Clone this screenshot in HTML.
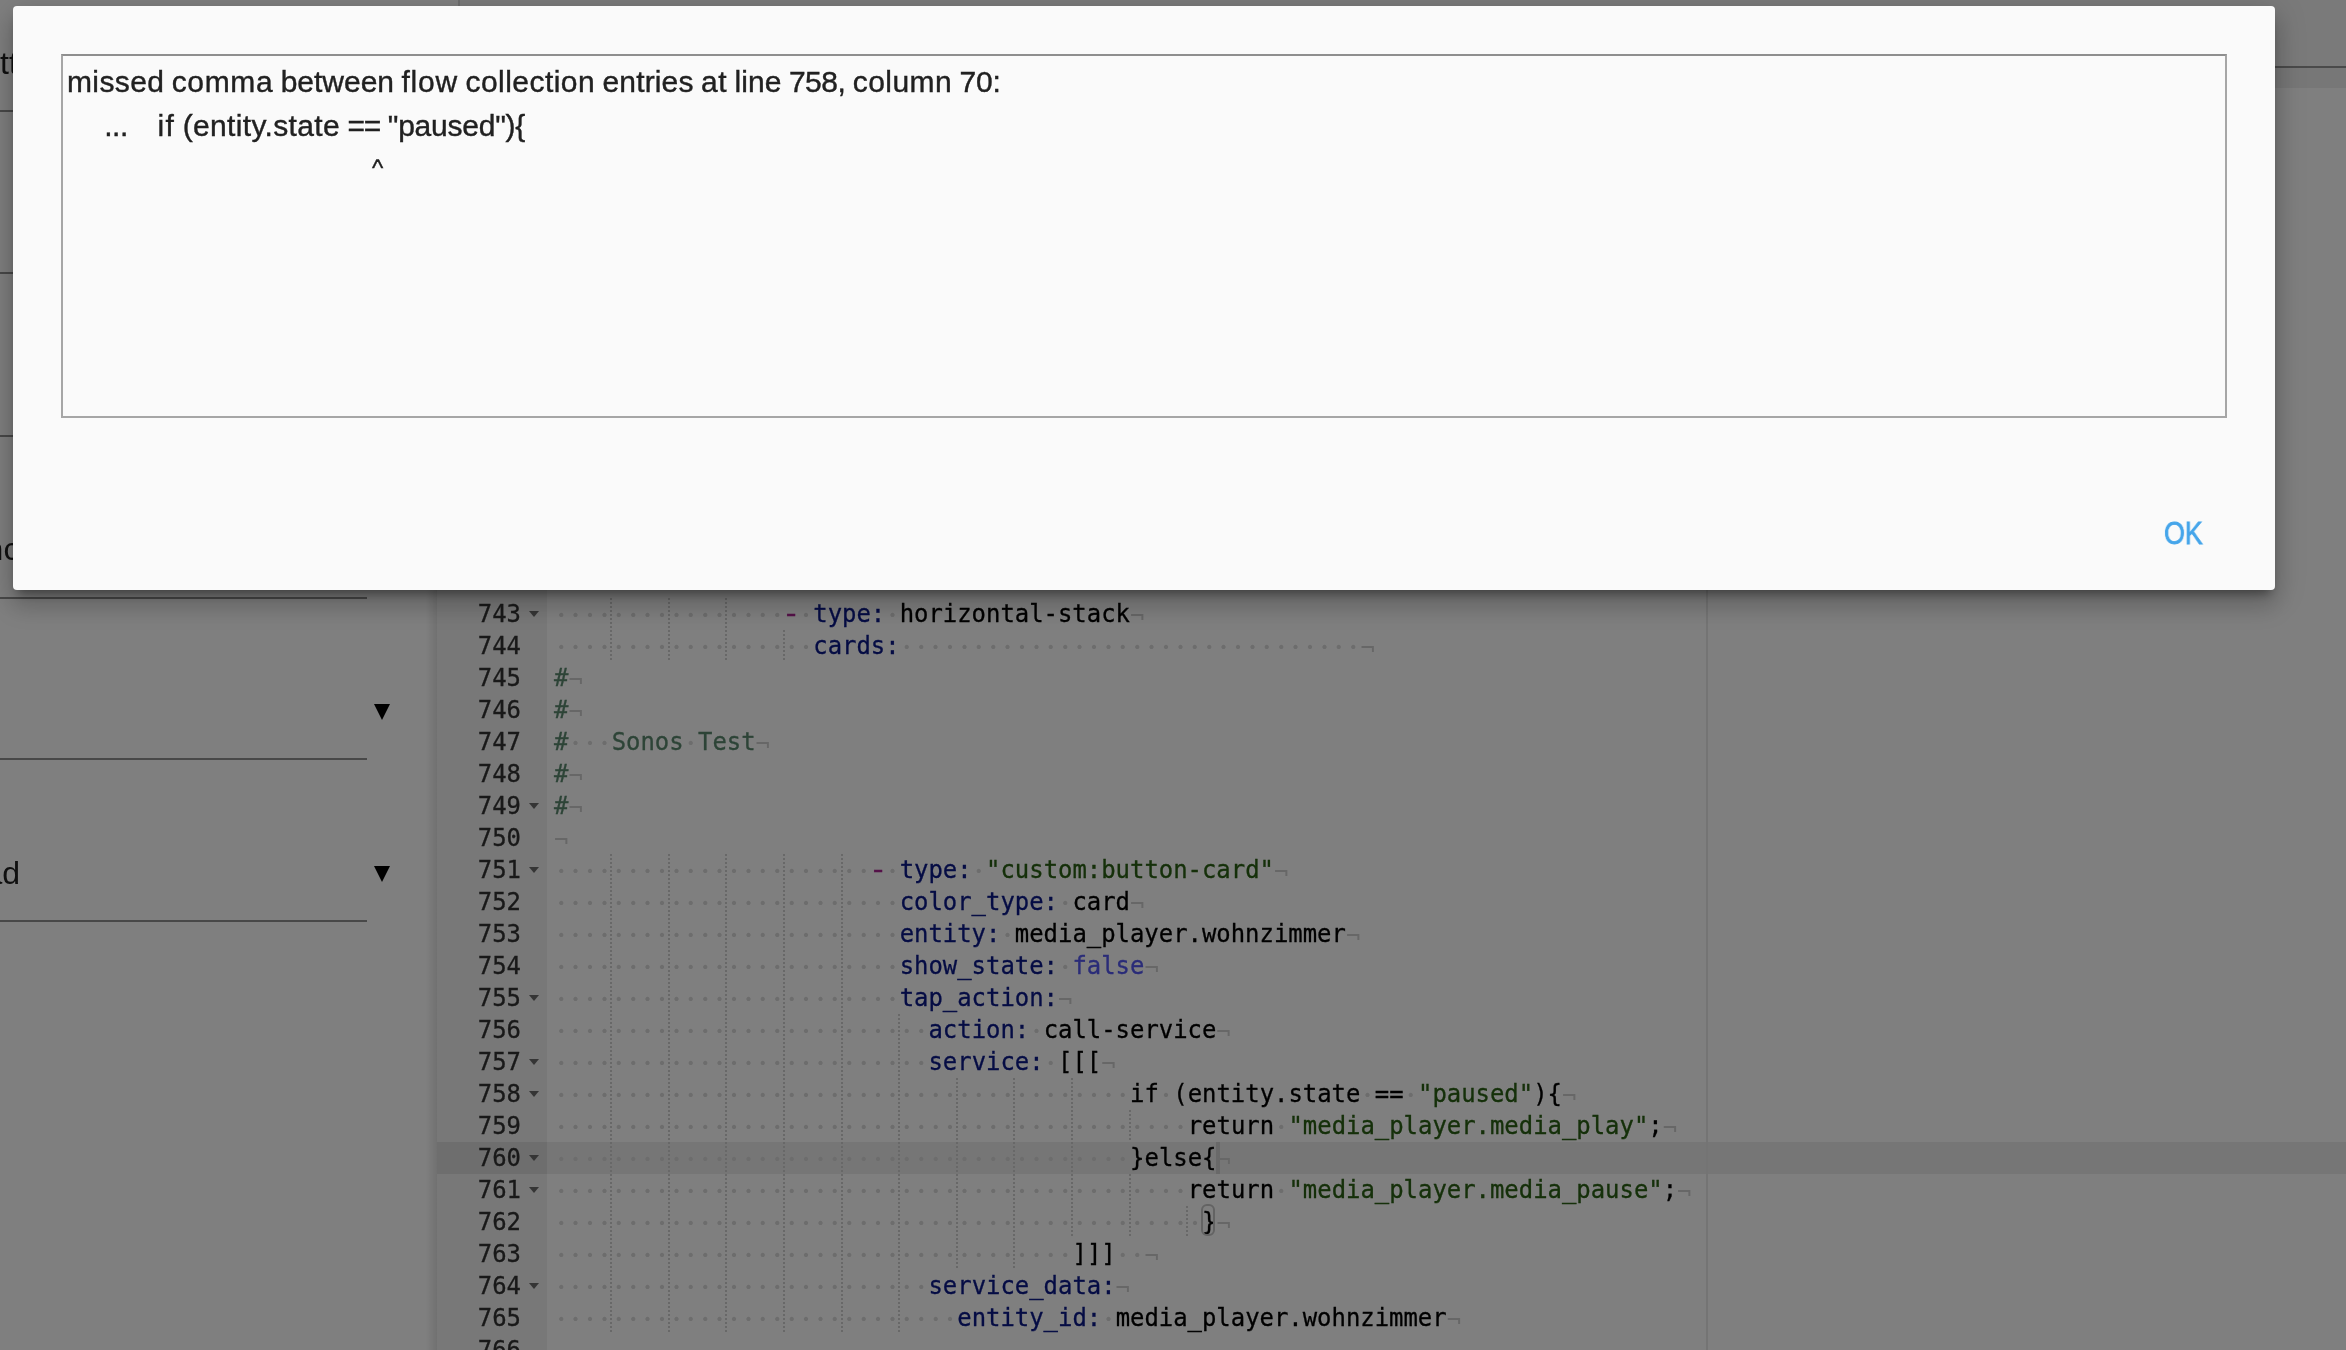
<!DOCTYPE html>
<html lang="en">
<head>
<meta charset="utf-8">
<title>Lovelace raw config editor</title>
<style>
html,body{margin:0;padding:0;}
body{width:2346px;height:1350px;overflow:hidden;position:relative;background:#f4f4f4;font-family:"Liberation Sans",sans-serif;color:#212121;}
#app{position:absolute;left:0;top:0;width:2346px;height:1350px;overflow:hidden;will-change:transform;}
/* page chrome behind the dialog */
.topbar{position:absolute;left:460px;top:0;width:1886px;height:66px;background:#f4f4f4;}
.topline{position:absolute;left:437px;top:66px;width:1909px;height:2px;background:#949494;}
.subbar{position:absolute;left:437px;top:68px;width:1909px;height:20px;background:#eeeeee;}
.left{position:absolute;left:0;top:0;width:458px;height:1350px;background:#fefefe;border-right:2px solid #dcdcdc;}
.left .edge{position:absolute;left:426px;top:88px;width:11px;height:1262px;background:linear-gradient(to right,rgba(0,0,0,0),rgba(0,0,0,0.11));}
.fld{position:absolute;left:0;width:367px;height:2px;background:#909090;}
.lbl{position:absolute;font-size:32px;line-height:40px;white-space:pre;color:#212121;}
.dd{position:absolute;left:373.5px;width:0;height:0;border-left:8.25px solid transparent;border-right:8.25px solid transparent;border-top:16.5px solid #000;}
/* ace editor */
.ace{position:absolute;left:437px;top:88px;width:1909px;height:1262px;background:#ffffff;overflow:hidden;font-family:"DejaVu Sans Mono","Liberation Mono",monospace;font-size:23.918px;line-height:32px;color:#000;-webkit-text-stroke-width:0.3px;}
.gutter{position:absolute;left:0;top:0;width:110px;height:100%;background:#f0f0f0;color:#333;}
.gc{position:absolute;left:0;width:110px;height:32px;box-sizing:border-box;padding-right:26px;text-align:right;white-space:pre;}
.gc.act{background:#dcdcdc;}
.fw{position:absolute;left:92px;top:13px;width:0;height:0;border-left:5px solid transparent;border-right:5px solid transparent;border-top:6px solid #6a6a6a;}
.actline{position:absolute;left:110px;top:1054px;width:1799px;height:32px;background:#ededed;}
.pm{position:absolute;left:1269px;top:0;width:2px;height:100%;background:#e8e8e8;}
.ln{position:absolute;left:117px;height:32px;white-space:pre;}
.ln i{font-style:normal;color:#dadada;position:relative;top:5.1px;left:1.2px;font-family:"Liberation Serif",serif;font-size:36px;letter-spacing:2.412px;line-height:0;-webkit-text-stroke-width:0;}
.ln i.e{top:2px;left:0;color:#cfcfcf;font-family:inherit;font-size:inherit;letter-spacing:0;line-height:inherit;}
.ig{color:#cfcfcf;}
.gd{position:absolute;width:2px;height:32px;background:repeating-linear-gradient(to bottom,#d0d0d0 0,#d0d0d0 2px,transparent 2px,transparent 4px);}
.k{color:#0a1888}.s{color:#2a6014}.c{color:#5a886e}.b{color:#5458f0}.l{color:#aa2492;display:inline-block;transform:scaleX(1.3)}.t{color:#000}
.cur{position:absolute;width:4px;height:32px;background:#d2d2d2;}
.bm{position:absolute;box-sizing:border-box;width:14.4px;height:32px;border:2px solid #c6c6c6;border-radius:6px;}
/* overlay */
.backdrop{position:absolute;left:0;top:0;width:2346px;height:1350px;background:rgba(0,0,0,0.5);}
.dialog{will-change:transform;position:absolute;left:13px;top:6px;width:2262px;height:584px;background:#fafafa;border-radius:4px;box-shadow:0 16px 24px 2px rgba(0,0,0,0.14),0 6px 30px 5px rgba(0,0,0,0.12),0 8px 10px -5px rgba(0,0,0,0.4);}
.ta{position:absolute;left:48px;top:48px;width:2166px;height:364px;box-sizing:border-box;border:2px solid #a6a6a6;border-top-color:#8e8e8e;background:#fafafa;font-size:30px;line-height:44px;color:#212121;}
.ta span{position:absolute;white-space:pre;-webkit-text-stroke:0.4px #212121;}
.ok{position:absolute;font-size:30.7px;line-height:44px;color:#45a5ea;white-space:pre;-webkit-text-stroke:0.8px #45a5ea;transform:scaleX(0.875);transform-origin:0 0;}
</style>
</head>
<body>
<div id="app">
  <div class="topbar"></div>
  <div class="topline"></div>
  <div class="subbar"></div>
  <div class="left">
    <div class="edge"></div>
<div class="fld" style="top:110px"></div>
<div class="fld" style="top:272px"></div>
<div class="fld" style="top:435px"></div>
<div class="fld" style="top:597px"></div>
<div class="fld" style="top:758px"></div>
<div class="fld" style="top:920px"></div>
<div class="dd" style="top:703.5px"></div>
<div class="dd" style="top:865.8px"></div>
<div class="lbl" style="left:0px;top:42.9px">tt</div>
<div class="lbl" style="left:-14.4px;top:528.7px">nc</div>
<div class="lbl" style="left:-15.6px;top:852.8px">ad</div>
  </div>
  <div class="ace">
    <div class="gutter">
<div class="gc" style="top:510px">743<b class="fw"></b></div>
<div class="gc" style="top:542px">744</div>
<div class="gc" style="top:574px">745</div>
<div class="gc" style="top:606px">746</div>
<div class="gc" style="top:638px">747</div>
<div class="gc" style="top:670px">748</div>
<div class="gc" style="top:702px">749<b class="fw"></b></div>
<div class="gc" style="top:734px">750</div>
<div class="gc" style="top:766px">751<b class="fw"></b></div>
<div class="gc" style="top:798px">752</div>
<div class="gc" style="top:830px">753</div>
<div class="gc" style="top:862px">754</div>
<div class="gc" style="top:894px">755<b class="fw"></b></div>
<div class="gc" style="top:926px">756</div>
<div class="gc" style="top:958px">757<b class="fw"></b></div>
<div class="gc" style="top:990px">758<b class="fw"></b></div>
<div class="gc" style="top:1022px">759</div>
<div class="gc act" style="top:1054px">760<b class="fw"></b></div>
<div class="gc" style="top:1086px">761<b class="fw"></b></div>
<div class="gc" style="top:1118px">762</div>
<div class="gc" style="top:1150px">763</div>
<div class="gc" style="top:1182px">764<b class="fw"></b></div>
<div class="gc" style="top:1214px">765</div>
<div class="gc" style="top:1246px">766</div>
    </div>
    <div class="actline"></div>
    <div class="pm"></div>
<div class="ln" style="top:510px"><span class="ig"><i>····</i></span><span class="ig"><i>····</i></span><span class="ig"><i>····</i></span><i>····</i><span class="l">-</span><i>·</i><span class="k">type</span><span class="k">:</span><i>·</i><span class="t">horizontal-stack</span><i class="e">¬</i></div>
<b class="gd" style="left:173px;top:510px"></b>
<b class="gd" style="left:231px;top:510px"></b>
<b class="gd" style="left:288px;top:510px"></b>
<div class="ln" style="top:542px"><span class="ig"><i>····</i></span><span class="ig"><i>····</i></span><span class="ig"><i>····</i></span><span class="ig"><i>····</i></span><i>··</i><span class="k">cards</span><span class="k">:</span><i>································</i><i class="e">¬</i></div>
<b class="gd" style="left:173px;top:542px"></b>
<b class="gd" style="left:231px;top:542px"></b>
<b class="gd" style="left:288px;top:542px"></b>
<b class="gd" style="left:346px;top:542px"></b>
<div class="ln" style="top:574px"><span class="c">#</span><i class="e">¬</i></div>
<div class="ln" style="top:606px"><span class="c">#</span><i class="e">¬</i></div>
<div class="ln" style="top:638px"><span class="c">#<i>·</i><i>·</i><i>·</i>Sonos<i>·</i>Test</span><i class="e">¬</i></div>
<div class="ln" style="top:670px"><span class="c">#</span><i class="e">¬</i></div>
<div class="ln" style="top:702px"><span class="c">#</span><i class="e">¬</i></div>
<div class="ln" style="top:734px"><i class="e">¬</i></div>
<div class="ln" style="top:766px"><span class="ig"><i>····</i></span><span class="ig"><i>····</i></span><span class="ig"><i>····</i></span><span class="ig"><i>····</i></span><span class="ig"><i>····</i></span><i>··</i><span class="l">-</span><i>·</i><span class="k">type</span><span class="k">:</span><i>·</i><span class="s">"custom:button-card"</span><i class="e">¬</i></div>
<b class="gd" style="left:173px;top:766px"></b>
<b class="gd" style="left:231px;top:766px"></b>
<b class="gd" style="left:288px;top:766px"></b>
<b class="gd" style="left:346px;top:766px"></b>
<b class="gd" style="left:404px;top:766px"></b>
<div class="ln" style="top:798px"><span class="ig"><i>····</i></span><span class="ig"><i>····</i></span><span class="ig"><i>····</i></span><span class="ig"><i>····</i></span><span class="ig"><i>····</i></span><i>····</i><span class="k">color_type</span><span class="k">:</span><i>·</i><span class="t">card</span><i class="e">¬</i></div>
<b class="gd" style="left:173px;top:798px"></b>
<b class="gd" style="left:231px;top:798px"></b>
<b class="gd" style="left:288px;top:798px"></b>
<b class="gd" style="left:346px;top:798px"></b>
<b class="gd" style="left:404px;top:798px"></b>
<div class="ln" style="top:830px"><span class="ig"><i>····</i></span><span class="ig"><i>····</i></span><span class="ig"><i>····</i></span><span class="ig"><i>····</i></span><span class="ig"><i>····</i></span><i>····</i><span class="k">entity</span><span class="k">:</span><i>·</i><span class="t">media_player.wohnzimmer</span><i class="e">¬</i></div>
<b class="gd" style="left:173px;top:830px"></b>
<b class="gd" style="left:231px;top:830px"></b>
<b class="gd" style="left:288px;top:830px"></b>
<b class="gd" style="left:346px;top:830px"></b>
<b class="gd" style="left:404px;top:830px"></b>
<div class="ln" style="top:862px"><span class="ig"><i>····</i></span><span class="ig"><i>····</i></span><span class="ig"><i>····</i></span><span class="ig"><i>····</i></span><span class="ig"><i>····</i></span><i>····</i><span class="k">show_state</span><span class="k">:</span><i>·</i><span class="b">false</span><i class="e">¬</i></div>
<b class="gd" style="left:173px;top:862px"></b>
<b class="gd" style="left:231px;top:862px"></b>
<b class="gd" style="left:288px;top:862px"></b>
<b class="gd" style="left:346px;top:862px"></b>
<b class="gd" style="left:404px;top:862px"></b>
<div class="ln" style="top:894px"><span class="ig"><i>····</i></span><span class="ig"><i>····</i></span><span class="ig"><i>····</i></span><span class="ig"><i>····</i></span><span class="ig"><i>····</i></span><i>····</i><span class="k">tap_action</span><span class="k">:</span><i class="e">¬</i></div>
<b class="gd" style="left:173px;top:894px"></b>
<b class="gd" style="left:231px;top:894px"></b>
<b class="gd" style="left:288px;top:894px"></b>
<b class="gd" style="left:346px;top:894px"></b>
<b class="gd" style="left:404px;top:894px"></b>
<div class="ln" style="top:926px"><span class="ig"><i>····</i></span><span class="ig"><i>····</i></span><span class="ig"><i>····</i></span><span class="ig"><i>····</i></span><span class="ig"><i>····</i></span><span class="ig"><i>····</i></span><i>··</i><span class="k">action</span><span class="k">:</span><i>·</i><span class="t">call-service</span><i class="e">¬</i></div>
<b class="gd" style="left:173px;top:926px"></b>
<b class="gd" style="left:231px;top:926px"></b>
<b class="gd" style="left:288px;top:926px"></b>
<b class="gd" style="left:346px;top:926px"></b>
<b class="gd" style="left:404px;top:926px"></b>
<b class="gd" style="left:461px;top:926px"></b>
<div class="ln" style="top:958px"><span class="ig"><i>····</i></span><span class="ig"><i>····</i></span><span class="ig"><i>····</i></span><span class="ig"><i>····</i></span><span class="ig"><i>····</i></span><span class="ig"><i>····</i></span><i>··</i><span class="k">service</span><span class="k">:</span><i>·</i><span class="t">[[[</span><i class="e">¬</i></div>
<b class="gd" style="left:173px;top:958px"></b>
<b class="gd" style="left:231px;top:958px"></b>
<b class="gd" style="left:288px;top:958px"></b>
<b class="gd" style="left:346px;top:958px"></b>
<b class="gd" style="left:404px;top:958px"></b>
<b class="gd" style="left:461px;top:958px"></b>
<div class="ln" style="top:990px"><span class="ig"><i>····</i></span><span class="ig"><i>····</i></span><span class="ig"><i>····</i></span><span class="ig"><i>····</i></span><span class="ig"><i>····</i></span><span class="ig"><i>····</i></span><span class="ig"><i>····</i></span><span class="ig"><i>····</i></span><span class="ig"><i>····</i></span><i>····</i><span class="t">if<i>·</i>(entity.state<i>·</i>==<i>·</i></span><span class="s">"paused"</span><span class="t">){</span><i class="e">¬</i></div>
<b class="gd" style="left:173px;top:990px"></b>
<b class="gd" style="left:231px;top:990px"></b>
<b class="gd" style="left:288px;top:990px"></b>
<b class="gd" style="left:346px;top:990px"></b>
<b class="gd" style="left:404px;top:990px"></b>
<b class="gd" style="left:461px;top:990px"></b>
<b class="gd" style="left:519px;top:990px"></b>
<b class="gd" style="left:576px;top:990px"></b>
<b class="gd" style="left:634px;top:990px"></b>
<div class="ln" style="top:1022px"><span class="ig"><i>····</i></span><span class="ig"><i>····</i></span><span class="ig"><i>····</i></span><span class="ig"><i>····</i></span><span class="ig"><i>····</i></span><span class="ig"><i>····</i></span><span class="ig"><i>····</i></span><span class="ig"><i>····</i></span><span class="ig"><i>····</i></span><span class="ig"><i>····</i></span><i>····</i><span class="t">return<i>·</i></span><span class="s">"media_player.media_play"</span><span class="t">;</span><i class="e">¬</i></div>
<b class="gd" style="left:173px;top:1022px"></b>
<b class="gd" style="left:231px;top:1022px"></b>
<b class="gd" style="left:288px;top:1022px"></b>
<b class="gd" style="left:346px;top:1022px"></b>
<b class="gd" style="left:404px;top:1022px"></b>
<b class="gd" style="left:461px;top:1022px"></b>
<b class="gd" style="left:519px;top:1022px"></b>
<b class="gd" style="left:576px;top:1022px"></b>
<b class="gd" style="left:634px;top:1022px"></b>
<b class="gd" style="left:692px;top:1022px"></b>
<div class="ln" style="top:1054px"><span class="ig"><i>····</i></span><span class="ig"><i>····</i></span><span class="ig"><i>····</i></span><span class="ig"><i>····</i></span><span class="ig"><i>····</i></span><span class="ig"><i>····</i></span><span class="ig"><i>····</i></span><span class="ig"><i>····</i></span><span class="ig"><i>····</i></span><i>····</i><span class="t">}else{</span><i class="e">¬</i></div>
<b class="gd" style="left:173px;top:1054px"></b>
<b class="gd" style="left:231px;top:1054px"></b>
<b class="gd" style="left:288px;top:1054px"></b>
<b class="gd" style="left:346px;top:1054px"></b>
<b class="gd" style="left:404px;top:1054px"></b>
<b class="gd" style="left:461px;top:1054px"></b>
<b class="gd" style="left:519px;top:1054px"></b>
<b class="gd" style="left:576px;top:1054px"></b>
<b class="gd" style="left:634px;top:1054px"></b>
<div class="ln" style="top:1086px"><span class="ig"><i>····</i></span><span class="ig"><i>····</i></span><span class="ig"><i>····</i></span><span class="ig"><i>····</i></span><span class="ig"><i>····</i></span><span class="ig"><i>····</i></span><span class="ig"><i>····</i></span><span class="ig"><i>····</i></span><span class="ig"><i>····</i></span><span class="ig"><i>····</i></span><i>····</i><span class="t">return<i>·</i></span><span class="s">"media_player.media_pause"</span><span class="t">;</span><i class="e">¬</i></div>
<b class="gd" style="left:173px;top:1086px"></b>
<b class="gd" style="left:231px;top:1086px"></b>
<b class="gd" style="left:288px;top:1086px"></b>
<b class="gd" style="left:346px;top:1086px"></b>
<b class="gd" style="left:404px;top:1086px"></b>
<b class="gd" style="left:461px;top:1086px"></b>
<b class="gd" style="left:519px;top:1086px"></b>
<b class="gd" style="left:576px;top:1086px"></b>
<b class="gd" style="left:634px;top:1086px"></b>
<b class="gd" style="left:692px;top:1086px"></b>
<div class="ln" style="top:1118px"><span class="ig"><i>····</i></span><span class="ig"><i>····</i></span><span class="ig"><i>····</i></span><span class="ig"><i>····</i></span><span class="ig"><i>····</i></span><span class="ig"><i>····</i></span><span class="ig"><i>····</i></span><span class="ig"><i>····</i></span><span class="ig"><i>····</i></span><span class="ig"><i>····</i></span><span class="ig"><i>····</i></span><i>·</i><span class="t">}</span><i class="e">¬</i></div>
<b class="gd" style="left:173px;top:1118px"></b>
<b class="gd" style="left:231px;top:1118px"></b>
<b class="gd" style="left:288px;top:1118px"></b>
<b class="gd" style="left:346px;top:1118px"></b>
<b class="gd" style="left:404px;top:1118px"></b>
<b class="gd" style="left:461px;top:1118px"></b>
<b class="gd" style="left:519px;top:1118px"></b>
<b class="gd" style="left:576px;top:1118px"></b>
<b class="gd" style="left:634px;top:1118px"></b>
<b class="gd" style="left:692px;top:1118px"></b>
<b class="gd" style="left:749px;top:1118px"></b>
<div class="ln" style="top:1150px"><span class="ig"><i>····</i></span><span class="ig"><i>····</i></span><span class="ig"><i>····</i></span><span class="ig"><i>····</i></span><span class="ig"><i>····</i></span><span class="ig"><i>····</i></span><span class="ig"><i>····</i></span><span class="ig"><i>····</i></span><i>····</i><span class="t">]]]</span><i>··</i><i class="e">¬</i></div>
<b class="gd" style="left:173px;top:1150px"></b>
<b class="gd" style="left:231px;top:1150px"></b>
<b class="gd" style="left:288px;top:1150px"></b>
<b class="gd" style="left:346px;top:1150px"></b>
<b class="gd" style="left:404px;top:1150px"></b>
<b class="gd" style="left:461px;top:1150px"></b>
<b class="gd" style="left:519px;top:1150px"></b>
<b class="gd" style="left:576px;top:1150px"></b>
<div class="ln" style="top:1182px"><span class="ig"><i>····</i></span><span class="ig"><i>····</i></span><span class="ig"><i>····</i></span><span class="ig"><i>····</i></span><span class="ig"><i>····</i></span><span class="ig"><i>····</i></span><i>··</i><span class="k">service_data</span><span class="k">:</span><i class="e">¬</i></div>
<b class="gd" style="left:173px;top:1182px"></b>
<b class="gd" style="left:231px;top:1182px"></b>
<b class="gd" style="left:288px;top:1182px"></b>
<b class="gd" style="left:346px;top:1182px"></b>
<b class="gd" style="left:404px;top:1182px"></b>
<b class="gd" style="left:461px;top:1182px"></b>
<div class="ln" style="top:1214px"><span class="ig"><i>····</i></span><span class="ig"><i>····</i></span><span class="ig"><i>····</i></span><span class="ig"><i>····</i></span><span class="ig"><i>····</i></span><span class="ig"><i>····</i></span><i>····</i><span class="k">entity_id</span><span class="k">:</span><i>·</i><span class="t">media_player.wohnzimmer</span><i class="e">¬</i></div>
<b class="gd" style="left:173px;top:1214px"></b>
<b class="gd" style="left:231px;top:1214px"></b>
<b class="gd" style="left:288px;top:1214px"></b>
<b class="gd" style="left:346px;top:1214px"></b>
<b class="gd" style="left:404px;top:1214px"></b>
<b class="gd" style="left:461px;top:1214px"></b>
<div class="ln" style="top:1246px"><i class="e">¬</i></div>
    <div class="bm" style="left:763.5px;top:1116px"></div>
    <div class="cur" style="left:779.4px;top:1054px"></div>
  </div>
</div>
<div class="backdrop"></div>
<div class="dialog">
  <div class="ta">
<span style="left:4.00px;top:4px;letter-spacing:0.373px">missed </span>
<span style="left:108.67px;top:4px;letter-spacing:0.653px">comma </span>
<span style="left:217.69px;top:4px;letter-spacing:-0.011px">between </span>
<span style="left:338.45px;top:4px;letter-spacing:0.817px">flow </span>
<span style="left:402.50px;top:4px;letter-spacing:0.455px">collection </span>
<span style="left:539.52px;top:4px;letter-spacing:0.139px">entries </span>
<span style="left:637.97px;top:4px;letter-spacing:0.541px">at </span>
<span style="left:671.48px;top:4px;letter-spacing:0.077px">line </span>
<span style="left:725.92px;top:4px;letter-spacing:-0.493px">758, </span>
<span style="left:789.74px;top:4px;letter-spacing:0.445px">column </span>
<span style="left:896.55px;top:4px;letter-spacing:-0.255px">70:</span>
<span style="left:41.15px;top:48px;letter-spacing:-0.435px">... </span>
<span style="left:94.57px;top:48px;letter-spacing:1.354px">if </span>
<span style="left:119.69px;top:48px;letter-spacing:0.345px">(entity.state </span>
<span style="left:284.42px;top:48px;letter-spacing:-1.068px">== </span>
<span style="left:324.74px;top:48px;letter-spacing:-0.239px">"paused"){</span>
<span style="left:308.94px;top:89.5px;font-size:24px">^</span>
  </div>
<div class="ok" style="left:2150.70px;top:506.0px">OK</div>
</div>
</body>
</html>
